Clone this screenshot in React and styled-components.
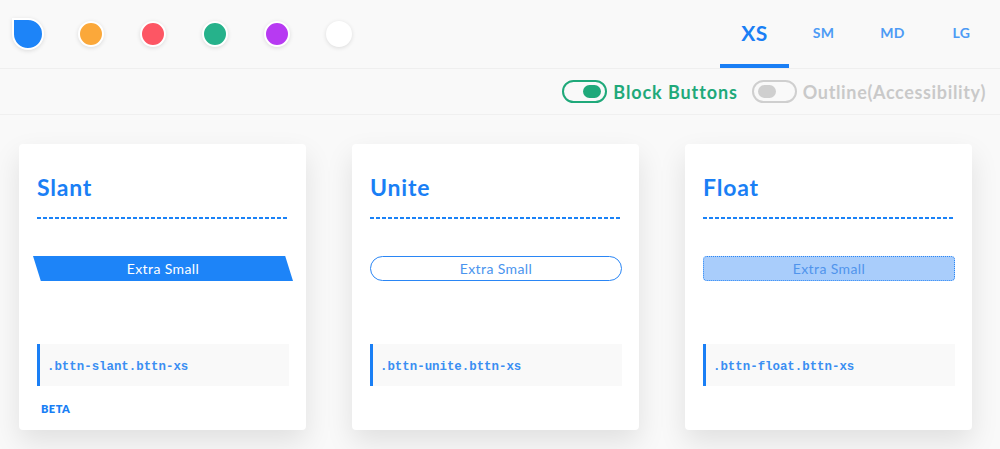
import React from 'react'
import styled, { createGlobalStyle, css } from 'styled-components'

const swatches = [
  { color: '#1d84f8', active: true },
  { color: '#fba83a' },
  { color: '#fd5664' },
  { color: '#26b28b' },
  { color: '#b73af2' },
  { color: '#ffffff' },
]

const sizes = ['XS', 'SM', 'MD', 'LG']

const cards = [
  { title: 'Slant', kind: 'slant', beta: true },
  { title: 'Unite', kind: 'unite' },
  { title: 'Float', kind: 'float' },
]

const GlobalStyle = createGlobalStyle`
  html, body {
    margin: 0;
    background: #f9f9f9;
    font-family: "Lato", "Noto Sans", sans-serif;
  }
`

const Page = styled.div`
  width: 1000px;
  height: 449px;
  overflow: hidden;
  background: #f9f9f9;
`

const TopBar = styled.div`
  height: 68px;
  display: flex;
  align-items: stretch;
  justify-content: space-between;
  border-bottom: 1px solid #efefef;
`

const Swatches = styled.div`
  display: flex;
  align-items: center;
  padding-left: 12px;
`

const Swatch = styled.div`
  box-sizing: border-box;
  border: 2px solid #fff;
  box-shadow: 0 1px 4px rgba(0, 0, 0, 0.12);
  background: ${p => p.color};
  ${p => p.active ? css`
    width: 32px;
    height: 32px;
    border-radius: 0 50% 50% 50%;
    margin-right: 34px;
  ` : css`
    width: 26px;
    height: 26px;
    border-radius: 50%;
    margin-right: 36px;
  `}
`

const Tabs = styled.div`
  display: flex;
  padding-right: 4px;
`

const Tab = styled.div`
  width: 69px;
  display: flex;
  align-items: center;
  justify-content: center;
  font-weight: 700;
  color: ${p => p.active ? '#1a7ff5' : '#4d9bf5'};
  font-size: ${p => p.active ? '21px' : '14px'};
  letter-spacing: 0.4px;
  border-bottom: 4px solid ${p => p.active ? '#1a7ff5' : 'transparent'};
`

const OptionBar = styled.div`
  height: 45px;
  display: flex;
  align-items: center;
  justify-content: flex-end;
  padding-right: 14px;
  border-bottom: 1px solid #f0f0f0;
`

const Option = styled.div`
  display: flex;
  align-items: center;
  gap: 6px;
  margin-left: 14px;
  color: ${p => p.on ? '#1fa97a' : '#c9c9c9'};
  font-size: 18px;
  font-weight: 700;
  letter-spacing: ${p => p.on ? '0.9px' : '0.65px'};
`

const Toggle = styled.div`
  box-sizing: border-box;
  width: 45px;
  height: 23px;
  border-radius: 12px;
  border: 2px solid ${p => p.on ? '#1fa97a' : '#cfcfcf'};
  display: flex;
  align-items: center;
  justify-content: ${p => p.on ? 'flex-end' : 'flex-start'};
  padding: 0 4px;
  &::after {
    content: "";
    width: 18px;
    height: 13px;
    border-radius: 7px;
    background: ${p => p.on ? '#1fa97a' : '#cfcfcf'};
  }
`

const Cards = styled.div`
  display: flex;
  gap: 46px;
  padding: 29px 0 0 19px;
`

const Card = styled.div`
  box-sizing: border-box;
  width: 287px;
  height: 286px;
  background: #fff;
  border-radius: 4px;
  box-shadow: 0 12px 28px rgba(0, 0, 0, 0.1);
  padding: 28px 17px 0 18px;
  display: flex;
  flex-direction: column;
`

const Title = styled.h2`
  margin: 0;
  font-size: 23px;
  line-height: 30px;
  font-weight: 700;
  letter-spacing: 0.8px;
  color: #1a7ff5;
  padding-bottom: 17px;
  position: relative;
  &::after {
    content: "";
    position: absolute;
    left: 0;
    right: 0;
    bottom: 0;
    height: 2px;
    background: repeating-linear-gradient(90deg, #1a82f7 0 4px, transparent 4px 6px);
  }
`

const ButtonArea = styled.div`
  height: 125px;
  padding-top: 37px;
  box-sizing: border-box;
`

const DemoButton = styled.div`
  height: 25px;
  display: flex;
  align-items: center;
  justify-content: center;
  font-size: 14px;
  letter-spacing: 0.4px;
  box-sizing: border-box;
  ${p => p.kind === 'slant' && css`
    margin: 0 -4px;
    color: #fff;
    background: #1d84f8;
    clip-path: polygon(0 0, 97% 0, 100% 100%, 3% 100%);
  `}
  ${p => p.kind === 'unite' && css`
    color: #4a94ee;
    border: 1.5px solid #2a86f5;
    border-radius: 13px;
  `}
  ${p => p.kind === 'float' && css`
    color: #5094ec;
    background: #a9cdfb;
    border: 1px dotted #2a86f5;
    border-radius: 4px;
  `}
`

const Code = styled.div`
  height: 42px;
  box-sizing: border-box;
  display: flex;
  align-items: center;
  padding: 4px 0 0 7px;
  background: #f9f9f9;
  border-left: 3px solid #1a7ff5;
  font-family: "Liberation Mono", monospace;
  font-size: 12.4px;
  font-weight: 700;
  color: #3a8ef2;
`

const Beta = styled.div`
  margin: 16px 0 0 4px;
  font-size: 11px;
  font-weight: 800;
  color: #1a7ff5;
  letter-spacing: 0.5px;
`

export default function App() {
  return (
    <Page>
      <GlobalStyle />
      <TopBar>
        <Swatches>
          {swatches.map(s => <Swatch key={s.color} color={s.color} active={s.active} />)}
        </Swatches>
        <Tabs>
          {sizes.map((s, i) => <Tab key={s} active={i === 0}>{s}</Tab>)}
        </Tabs>
      </TopBar>
      <OptionBar>
        <Option on><Toggle on />Block Buttons</Option>
        <Option><Toggle />Outline(Accessibility)</Option>
      </OptionBar>
      <Cards>
        {cards.map(c => (
          <Card key={c.title}>
            <Title>{c.title}</Title>
            <ButtonArea>
              <DemoButton kind={c.kind}>Extra Small</DemoButton>
            </ButtonArea>
            <Code>.bttn-{c.kind}.bttn-xs</Code>
            {c.beta && <Beta>BETA</Beta>}
          </Card>
        ))}
      </Cards>
    </Page>
  )
}
